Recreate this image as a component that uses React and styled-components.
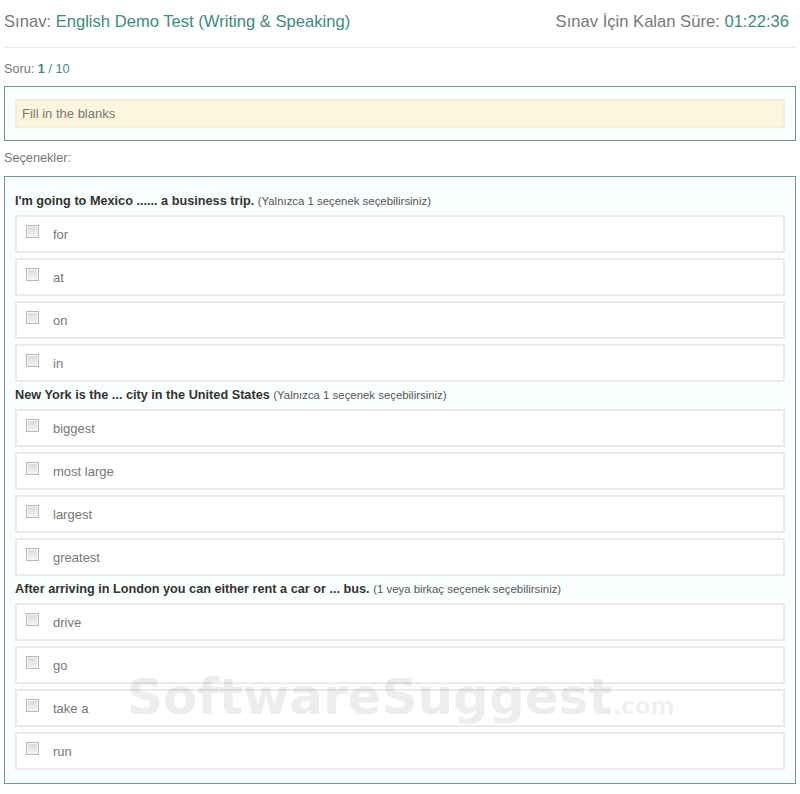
import React from 'react';
import styled, { createGlobalStyle } from 'styled-components';

const GlobalStyle = createGlobalStyle`
  body {
    margin: 0;
    background: #fff;
    font-family: "Liberation Sans", Arial, sans-serif;
  }
`;

const Page = styled.div`
  position: relative;
  padding: 0 4px;
  width: 792px;
`;

const Header = styled.div`
  display: flex;
  justify-content: space-between;
  align-items: center;
  padding: 11px 7px 14px 0;
  line-height: 22px;
  font-size: 16.6px;
  color: #777;
  border-bottom: 1px solid #eee;
`;

const Accent = styled.span`
  color: #3d8b7b;
  font-weight: ${(p) => (p.bold ? 'bold' : 'normal')};
`;

const Small = styled.div`
  font-size: 12.7px;
  line-height: 16px;
  color: #777;
  margin-top: ${(p) => p.top}px;
`;

const Panel = styled.div`
  border: 1px solid #6f9893;
  background: #fbfefe;
  margin-top: ${(p) => p.top}px;
  padding: ${(p) => p.pad};
`;

const Notice = styled.div`
  background: #fdf6dc;
  border: 2px solid #f6eed8;
  height: 25px;
  line-height: 25px;
  padding-left: 5px;
  font-size: 13px;
  color: #777;
`;

const QuestionLabel = styled.div`
  font-size: 12.7px;
  line-height: 17px;
  font-weight: bold;
  color: #333;
  margin: 2px 0 5px;
  span {
    font-weight: normal;
    font-size: 11.4px;
    color: #555;
  }
`;

const Option = styled.label`
  display: flex;
  align-items: center;
  height: 34px;
  border: 2px solid #ebebeb;
  background: #fff;
  margin-bottom: 5px;
  padding-left: 9px;
  font-size: 13px;
  color: #777;
`;

const Box = styled.input`
  appearance: none;
  width: 13px;
  height: 13px;
  margin: -5px 14px 0 0;
  border: 1px solid #b9b9b9;
  background: linear-gradient(180deg, #dadada 0%, #e9e9e9 60%, #f3f3f3 100%);
  box-shadow: inset 0 0 0 1px #f4f4f4;
`;

const Watermark = styled.div`
  position: absolute;
  left: 127px;
  top: 668px;
  font-family: "DejaVu Sans", Verdana, sans-serif;
  font-weight: bold;
  font-size: 50px;
  color: rgba(0, 0, 0, 0.07);
  pointer-events: none;
  white-space: nowrap;
  small {
    font-size: 23px;
  }
`;

const questions = [
  {
    text: "I'm going to Mexico ...... a business trip.",
    hint: '(Yalnızca 1 seçenek seçebilirsiniz)',
    options: ['for', 'at', 'on', 'in'],
  },
  {
    text: 'New York is the ... city in the United States',
    hint: '(Yalnızca 1 seçenek seçebilirsiniz)',
    options: ['biggest', 'most large', 'largest', 'greatest'],
  },
  {
    text: 'After arriving in London you can either rent a car or ... bus.',
    hint: '(1 veya birkaç seçenek seçebilirsiniz)',
    options: ['drive', 'go', 'take a', 'run'],
  },
];

export default function App() {
  return (
    <Page>
      <GlobalStyle />
      <Header>
        <div>
          Sınav: <Accent>English Demo Test (Writing &amp; Speaking)</Accent>
        </div>
        <div>
          Sınav İçin Kalan Süre: <Accent>01:22:36</Accent>
        </div>
      </Header>
      <Small top={13}>
        Soru: <Accent bold>1</Accent> <Accent>/ 10</Accent>
      </Small>
      <Panel top={9} pad="12px 10px">
        <Notice>Fill in the blanks</Notice>
      </Panel>
      <Small top={9}>Seçenekler:</Small>
      <Panel top={10} pad="14px 10px 8px">
        {questions.map((q) => (
          <div key={q.text}>
            <QuestionLabel>
              {q.text} <span>{q.hint}</span>
            </QuestionLabel>
            {q.options.map((o) => (
              <Option key={o}>
                <Box type="checkbox" />
                {o}
              </Option>
            ))}
          </div>
        ))}
      </Panel>
      <Watermark>
        SoftwareSuggest<small>.com</small>
      </Watermark>
    </Page>
  );
}
